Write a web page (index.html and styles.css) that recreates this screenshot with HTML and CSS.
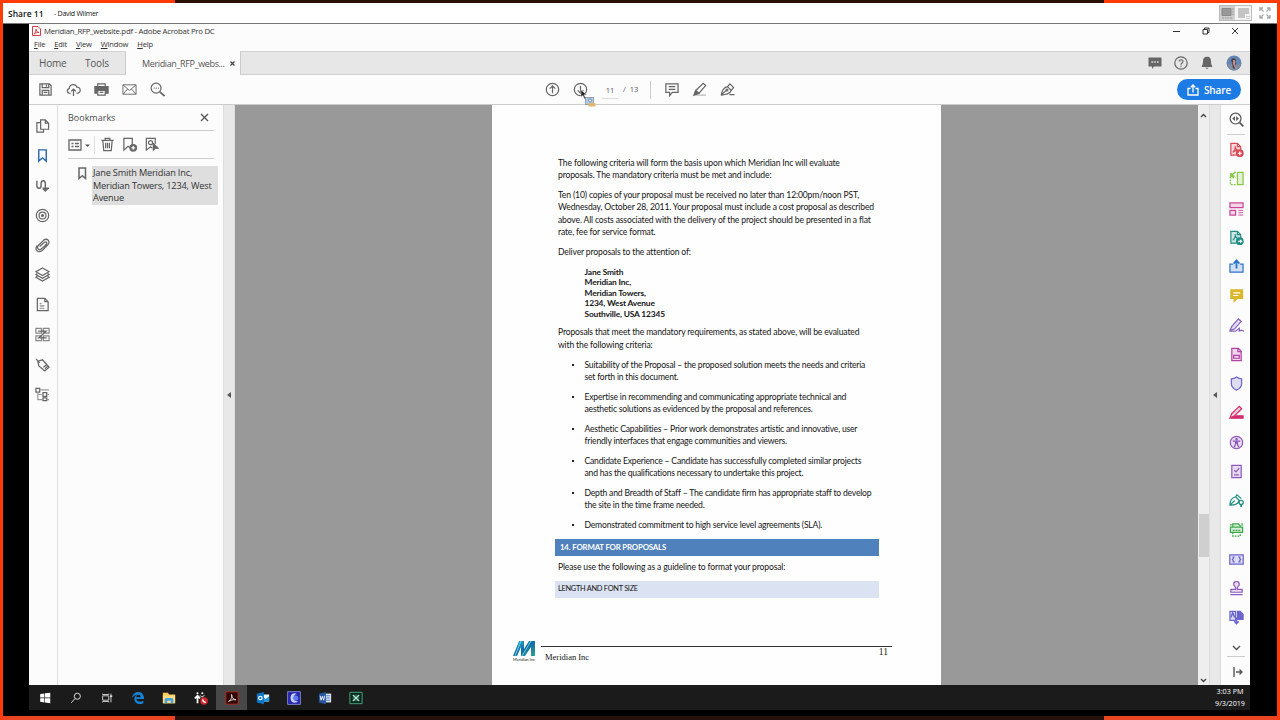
FILE: index.html
```html
<!DOCTYPE html>
<html lang="en">
<head>
    <meta charset="UTF-8">
    <meta name="viewport" content="width=device-width, initial-scale=1.0">
    <title>Share 11 - David Wilmer</title>
    <link rel="stylesheet" href="styles.css">
</head>
<body>
    <div class="share-edge"></div>
    <header class="share-bar">
        <span class="share-name">Share 11</span>
        <span class="share-user">- David Wilmer</span>
        <div class="share-views">
            <svg class="view-toggle" width="33" height="16" viewBox="0 0 33 16">
                <rect x=".5" y=".5" width="32" height="15" fill="#f4f4f4" stroke="#bbb"/>
                <path d="M1 1h15v14H1z" fill="#cfcfcf"/>
                <path d="M3 3.500h9v7H3z" fill="#999" stroke="#888"/>
                <path d="M14 3v8M3 13h11" stroke="#999" stroke-dasharray="2 .7"/>
                <path d="M19 3h11v6H19zM19 9h7v4h-7z" fill="#c4c4c4"/>
                <path d="M27 11.500h4M27 13.500h4" stroke="#ccc"/>
            </svg>
            <svg width="12" height="12" viewBox="0 0 12 12" fill="none" stroke="#aaa" stroke-width="1.300">
                <path d="M1 4V1h3M1 1l3.500 3.500M8 1h3v3M11 1 7.500 4.500M1 8v3h3M1 11l3.500-3.500M8 11h3V8M11 11 7.500 7.500"/>
            </svg>
        </div>
    </header>

    <div class="desktop">
        <div class="window">
            <div class="title-bar">
                <svg width="9" height="10" viewBox="0 0 9 10" fill="none" stroke="#d33d43"><path d="M.5.5h5.500l2.500 2.500v6.500h-8zM2 8c2-2 2.500-4 2-5 0 2 1 3 3 3.500-2-.2-3.500.3-5 1.500"/></svg>
                <span>Meridian_RFP_website.pdf - Adobe Acrobat Pro DC</span>
                <div class="window-buttons">
                    <svg viewBox="0 0 8 8"><path d="M0 4.500h7"/></svg>
                    <svg viewBox="0 0 8 8"><path d="M1 2.500h4.500V7H1zM2.500 2.500V1H7v4.500H5.500"/></svg>
                    <svg viewBox="0 0 8 8"><path d="m1 1 6 6M7 1 1 7"/></svg>
                </div>
            </div>
            <nav class="menu-bar">
                <span><u>F</u>ile</span><span><u>E</u>dit</span><span><u>V</u>iew</span><span><u>W</u>indow</span><span><u>H</u>elp</span>
            </nav>
            <div class="tab-strip">
                <span class="tab-home">Home</span>
                <span class="tab-tools">Tools</span>
                <div class="tab-file"><span>Meridian_RFP_webs...</span><svg width="5" height="5" viewBox="0 0 5 5" stroke="#444" stroke-width="1.200"><path d="m.5.5 4 4m0-4-4 4"/></svg></div>
                <div class="account">
                    <svg width="14" height="14" viewBox="0 0 14 14"><path d="M.5 1.500h13v9H6L4 13v-2.500H.5z" fill="#666"/><path d="M3.500 6h1.300M6.300 6h1.300M9.200 6h1.300" stroke="#fff" stroke-width="1.300"/></svg>
                    <svg width="14" height="14" viewBox="0 0 14 14" fill="none" stroke="#666" stroke-width="1.200"><circle cx="7" cy="7" r="6.200"/><path d="M5.200 5.500c0-2.400 3.800-2.300 3.700 0C8.900 7 7 6.900 7 8.700M7 9.700V11"/></svg>
                    <svg width="14" height="14" viewBox="0 0 14 14"><path d="M7 .8c3 0 4 2 4 4.500C11 8 11.500 9 12.500 11h-11C2.500 9 3 8 3 5.300 3 2.800 4 .8 7 .8M5.500 11.700h3c0 1.500-3 1.500-3 0" fill="#666"/></svg>
                    <svg width="16" height="16" viewBox="0 0 16 16"><circle cx="8" cy="8" r="7.500" fill="#6585b2"/><path d="M1 10c3-2 7 0 14-1-1 4-4 6.500-7 6.500S2 13 1 10" fill="#7e8da3"/><circle cx="7.500" cy="5.500" r="2.300" fill="#4a3d46"/><path d="M6 7.500h4l-1 6H7z" fill="#454556"/><path d="M7 5h2v5l2 3H9L7 9z" fill="#c88c80"/></svg>
                </div>
            </div>
            <div class="toolbar">
                <div class="file-tools">
                    <svg class="ic" viewBox="0 0 16 16"><path d="M2 2h10l2 2v10H2zM4.500 2v4h7V2M9 3v2M4.500 14V9h7v5M6 11h4"/></svg>
                    <svg class="ic" viewBox="0 0 16 16"><path d="M5 12H4C1 12 .5 7.500 3.500 7c0-5 7-5.500 8-1.500C16 5 16.500 12 12 12h-1M8 15V7.500M5.500 10 8 7.500l2.500 2.500"/></svg>
                    <svg class="ic" viewBox="0 0 16 16"><path d="M4 5V2h8v3M4 14V9h8v5z"/><path d="M1 5h14v7h-2V8.500H3V12H1z" fill="#666"/><path d="M6 11h4"/></svg>
                    <svg class="ic" viewBox="0 0 16 16"><path d="M1 3h14v10H1zl7 6 7-6M1 13l5-5.500M15 13l-5-5.500" stroke-width="1"/></svg>
                    <svg class="ic" viewBox="0 0 16 16"><circle cx="6.500" cy="6.500" r="5.300"/><path d="m10.500 10.500 5 4.500" stroke-width="1.800"/><path d="M4 6.500h1M6.200 6.500h1M8.400 6.500h1"/></svg>
                </div>
                <div class="page-tools">
                    <svg class="ic" viewBox="0 0 16 16"><circle cx="8" cy="8" r="6.600"/><path d="M8 12V4M5 7l3-3 3 3"/></svg>
                    <div class="next-page">
                        <svg class="ic" viewBox="0 0 16 16"><circle cx="8" cy="8" r="6.600"/><path d="M8 4v8M5 9l3 3 3-3"/></svg>
                        <svg class="cursor" width="17" height="18" viewBox="0 0 17 18"><path d="M1 0v7l1.800-1.800L4.500 9l1.200-.7L4 4.800h2.500z" fill="#222" stroke="#fff" stroke-width=".4"/><rect x="5.500" y="7.500" width="8" height="7" fill="#b4cbe4" stroke="#798795" stroke-width=".7"/><circle cx="10" cy="10.500" r="1.600" fill="#dfeaf5" stroke="#6c8fb4"/><rect x="8.500" y="13" width="7" height="3.500" rx="1" fill="#e0b56c"/></svg>
                    </div>
                    <span class="page-number">11</span>
                    <span class="page-count">/&nbsp; 13</span>
                    <i></i>
                    <svg class="ic" viewBox="0 0 16 16"><path d="M2 2h13v9H9l-3 3.500V11H2zM5 5h7M5 7.800h7"/></svg>
                    <svg class="ic" viewBox="0 0 16 16"><path d="M7 13h8v2H2z" fill="#ccc" stroke="none"/><path d="m4 9 8-7.500 2.500 2.300L7.500 12 3 12.500z"/><path d="m4 9 3.500 3L2 14z" fill="#666"/></svg>
                    <svg class="ic" viewBox="0 0 16 16"><path d="M1.500 14C2 9 4 6 8 5l4 4c-1.500 4-6 4.500-10.500 5zl5-5M8 5l2.500-3 4 4L12 9M10 13.500h5.500"/><circle cx="7.500" cy="8.500" r="1"/></svg>
                </div>
                <div class="share-button"><svg width="12" height="12" viewBox="0 0 12 12" fill="none" stroke="#fff" stroke-width="1.300"><path d="M3.500 4.500H1v6.500h10V4.500H8.500M6 8.500V1M3.800 3.200 6 1l2.200 2.200"/></svg>Share</div>
            </div>

            <div class="workspace">
                <aside class="nav-rail">
                    <svg class="ic" viewBox="0 0 16 16"><path d="M6 2h5l3.500 3.500V12H6zM11 2v3.500h3.500M6 5H2v10h7v-3"/></svg>
                    <svg class="ic active" viewBox="0 0 16 16"><path d="M4 2h8v12l-4-3.500L4 14z" stroke-width="1.500"/></svg>
                    <svg class="ic" viewBox="0 0 16 16"><path d="M2 3v5c0 4 4.500 4 4.500 0V6c0-4 4.500-4 4.500 0v8M8.500 11.500l2.500 2.500 2.500-2.500M8 11h7" stroke-width="1.500"/></svg>
                    <svg class="ic" viewBox="0 0 16 16"><circle cx="8" cy="8" r="6.600"/><circle cx="8" cy="8" r="3.700"/><circle cx="8" cy="8" r="1" fill="#666"/></svg>
                    <svg class="ic" viewBox="0 0 16 16"><path d="m5 9 5-4.500c2-1.500 3.500 1 2 2.500L7 11.500c-3 2.500-6-1-3-4l5-5c4-3 8 1 4.500 5L8 13c-5 4-9-1-5.500-5"/></svg>
                    <svg class="ic" viewBox="0 0 16 16"><path d="m8 1 7 4-7 4-7-4zM2.500 7 1 8l7 4 7-4-1.500-1M2.500 10 1 11l7 4 7-4-1.500-1"/></svg>
                    <svg class="ic" viewBox="0 0 16 16"><path d="M2.500 1.500h8L14 5v9.500H2.500zM10.500 1.500V5H14"/><path d="M5 7h2M5 9.500h5M5 12h5" stroke="#888"/></svg>
                    <svg class="ic" viewBox="0 0 16 16"><path d="M1 1.500h6v5H1zM9 1.500h6v5H9zM1 9.500h6v5H1zM9 9.500h6v5H9z" stroke="#888"/><path d="M3.500 4.500H12L4 11.500h8.500" /></svg>
                    <svg class="ic" viewBox="0 0 16 16"><path d="M3 4.500 8 3l7 8-4.500 4L4 9.500zM5 6 1 2M9 11l3-2.500M10.500 12.500l3-2.500"/></svg>
                    <svg class="ic" viewBox="0 0 16 16"><path d="M1 1.500h4v4H1zM8.500 6h4v4h-4zM8.500 11.500h4v3h-4z"/><path d="M5 3h10M3 5.500v8h5.500M3 8h5.500M12.500 8H15M12.500 13.500H15" stroke="#999"/></svg>
                </aside>
                <section class="bookmarks">
                    <div class="bookmarks-head"><span>Bookmarks</span><svg width="9" height="9" viewBox="0 0 9 9" stroke="#555" stroke-width="1.300"><path d="m1 1 7 7m0-7L1 8"/></svg></div>
                    <div class="bookmarks-tools">
                        <svg width="23" height="14" viewBox="0 0 23 14" fill="none" stroke="#666" stroke-width="1.300"><path d="M1 2h12v10H1zM3.500 5.500h2M3.500 8.500h2M7 5.500h4M7 8.500h4"/><path d="M17 6.500h5L19.500 9z" fill="#555" stroke="none"/></svg>
                        <i></i>
                        <svg class="ic" viewBox="0 0 16 16"><path d="M1.500 3.500h13M5.500 3.500v-2h5v2M3 3.500l1 11h8l1-11M6 6v6M8 6v6M10 6v6"/></svg>
                        <svg class="ic" viewBox="0 0 16 16"><path d="M9 11.500 6.500 10 2 14V1.500h9v7"/><circle cx="12" cy="11.500" r="3.500" fill="#666"/><path d="M12 9.500v4M10 11.500h4" stroke="#fff"/></svg>
                        <svg class="ic" viewBox="0 0 16 16"><path d="m9 12-2-1.500L2.500 14V1.500H12v6"/><circle cx="7" cy="6" r="2.200"/><path d="m10 7 5 5h-3l-2 2z" fill="#666"/></svg>
                    </div>
                    <div class="bookmark">
                        <svg width="9" height="13" viewBox="0 0 9 13" fill="none" stroke="#666" stroke-width="1.500"><path d="M1 1h6.500v10.500L4.300 8.700 1 11.500z"/></svg>
                        <p>Jane Smith Meridian Inc,<br>Meridian Towers, 1234, West<br>Avenue</p>
                    </div>
                </section>
                <div class="splitter splitter-left"><i></i></div>
                <main class="document">
                    <article class="page">
                        <p>The following criteria will form the basis upon which Meridian Inc will evaluate<br>proposals. The mandatory criteria must be met and include:</p>
                        <p>Ten (10) copies of your proposal must be received no later than 12:00pm/noon PST,<br>Wednesday, October 28, 2011. Your proposal must include a cost proposal as described<br>above. All costs associated with the delivery of the project should be presented in a flat<br>rate, fee for service format.</p>
                        <p>Deliver proposals to the attention of:</p>
                        <address>Jane Smith<br>Meridian Inc,<br>Meridian Towers,<br>1234, West Avenue<br>Southville, USA 12345</address>
                        <p>Proposals that meet the mandatory requirements, as stated above, will be evaluated<br>with the following criteria:</p>
                        <ul>
                            <li>Suitability of the Proposal – the proposed solution meets the needs and criteria<br>set forth in this document.</li>
                            <li>Expertise in recommending and communicating appropriate technical and<br>aesthetic solutions as evidenced by the proposal and references.</li>
                            <li>Aesthetic Capabilities – Prior work demonstrates artistic and innovative, user<br>friendly interfaces that engage communities and viewers.</li>
                            <li>Candidate Experience – Candidate has successfully completed similar projects<br>and has the qualifications necessary to undertake this project.</li>
                            <li>Depth and Breadth of Staff – The candidate firm has appropriate staff to develop<br>the site in the time frame needed.</li>
                            <li>Demonstrated commitment to high service level agreements (SLA).</li>
                        </ul>
                        <h2>14. FORMAT FOR PROPOSALS</h2>
                        <p>Please use the following as a guideline to format your proposal:</p>
                        <h3>LENGTH AND FONT SIZE</h3>
                        <footer>
                            <div class="logo">
                                <svg width="22" height="17" viewBox="0 0 22 17">
                                    <defs><linearGradient id="logoFill" x1="0" y1="0" x2="1" y2="1"><stop offset="0" stop-color="#35b6d4"/><stop offset=".5" stop-color="#126caa"/><stop offset="1" stop-color="#2da58d"/></linearGradient></defs>
                                    <path d="M6 1h5v8l5-8h6v15h-4V7l-6 9H8V7l-4 9H0z" fill="url(#logoFill)"/><path d="m8 1-6 15M18 1 9 16" stroke="#70d2cf"/>
                                </svg>
                                <small>Meridian Inc</small>
                            </div>
                            <div class="footer-line"><span>Meridian Inc</span><b>11</b></div>
                        </footer>
                    </article>
                </main>
                <div class="scrollbar">
                    <svg width="7" height="5" viewBox="0 0 7 5"><path d="m1 4 2.500-2.500L6 4"/></svg>
                    <div class="thumb"></div>
                    <svg width="7" height="5" viewBox="0 0 7 5"><path d="m1 1 2.500 2.500L6 1"/></svg>
                </div>
                <div class="splitter splitter-right"><i></i></div>
                <aside class="tool-rail">
                    <svg class="ic search" viewBox="0 0 16 16"><circle cx="7" cy="7" r="5.800"/><path d="m11.300 11.300 4 4" stroke-width="1.800"/><path d="M6.300 4.500v5L3.500 7zM7.700 4.500v5L10.500 7z" fill="#555" stroke="none"/></svg>
                    <i></i>
                    <svg class="ic red" viewBox="0 0 16 16"><path class="tint" d="M8 14H2V1.500h7L12.500 5v4M9 1.500V5h3.500"/><path d="M4 11c3-3 3-5 2.500-6.500C6.500 7 8 8.500 10 9M4 11c2-2 4-2 5-2"/><circle class="solid" cx="11.500" cy="12" r="3.500"/><path d="M9.500 12h4M11.500 10v4" stroke="#fff"/></svg>
                    <svg class="ic lime" viewBox="0 0 16 16"><path class="tint" d="M9 1.500h6v13H9z"/><path d="M7 14.500H1.500V7H7" stroke-dasharray="2 1"/><path d="M7 1 2 5M2 2v3.500h4" stroke-width="1.700"/></svg>
                    <svg class="ic pink" viewBox="0 0 16 16"><path class="tint" d="M1 2h14v5H1zM1 10h6v5H1z"/><path d="M10 10h5M10 12.500h5M10 15h5" stroke-width="1"/></svg>
                    <svg class="ic teal" viewBox="0 0 16 16"><path class="tint" d="M8 14H2V1.500h7L12.500 5v4M9 1.500V5h3.500"/><path d="M4 11c3-3 3-5 2.500-6.500C6.500 7 8 8.500 10 9"/><circle class="solid" cx="11.500" cy="12" r="3.500"/><path d="M9.500 12h4M12 10.500l1.500 1.500-1.500 1.500" stroke="#fff"/></svg>
                    <svg class="ic blue" viewBox="0 0 16 16"><path class="tint" d="M4.500 5.500H1V14h14V5.500h-3.500"/><path d="M8 10V2M5 5l3-3.500L11 5" stroke-width="2"/></svg>
                    <svg class="ic yellow" viewBox="0 0 16 16"><path class="solid" d="M2 2h12.500v9H9l-3.500 3.500V11H2z"/><path d="M4.500 5.200h7.500M4.500 8H10" stroke="#fff"/></svg>
                    <svg class="ic purple" viewBox="0 0 16 16"><path class="tint" d="m3 9 7-8 3 2.500-7 8-5 2z"/><path d="M1 14h6l4-3v3l2-1 3 1"/></svg>
                    <svg class="ic magenta" viewBox="0 0 16 16"><path class="tint" d="M3 1.500h7l3 3v10H3zM9.500 1.500v3.500H13M5 9h6v3H5z"/></svg>
                    <svg class="ic indigo" viewBox="0 0 16 16"><path class="tint" d="M8 1c2 1.500 3.500 2 5.500 2v5c0 3.500-3 6-5.500 7-2.500-1-5.500-3.500-5.500-7V3C4.500 3 6 2.500 8 1z"/></svg>
                    <svg class="ic crimson" viewBox="0 0 16 16"><path class="tint" d="m3 9 8-7.500L13.500 4 6 11.500 1 14z"/><path class="solid" d="M8 11.500h7V14H2z"/></svg>
                    <svg class="ic violet" viewBox="0 0 16 16"><circle class="tint" cx="8" cy="8" r="6.600"/><circle class="solid" cx="8" cy="4.500" r=".7"/><path d="M4 6.500h8M8 6v3.500M7 7v3l-1.500 3M9 7v3l1.500 3"/></svg>
                    <svg class="ic violet" viewBox="0 0 16 16"><path class="tint" d="M3 1.500h10v13H3z"/><path d="m5.500 6.500 2 2 3.500-4M5.500 11.500h5"/></svg>
                    <svg class="ic teal" viewBox="0 0 16 16"><path d="M1 13C1 8 3 5 7 4l4 4c-1 4-5 5-10 5zl5-5M7 4l1.500-2L13 6"/><circle cx="13" cy="10" r="2.200"/><path d="M13 12v3" stroke-width="2"/></svg>
                    <svg class="ic green" viewBox="0 0 16 16"><path class="tint" d="M4 5V2h6l2 2v1M1.500 5.500h13V11h-13z"/><path d="M4 9h8M4 11v4h8v-4" stroke-dasharray="2 1"/><path d="M1 3h2M14 1v3"/></svg>
                    <svg class="ic indigo" viewBox="0 0 16 16"><path class="tint" d="M.8 3h14.400v10H.8z"/><path d="M6 5.500H4.500V7L3.500 8l1 1v1.500H6M10 5.500h1.500V7l1 1-1 1v1.500H10"/></svg>
                    <svg class="ic violet" viewBox="0 0 16 16"><path class="tint" d="M7 9c1-3-2-3-2-5.500a3 3 0 0 1 6 0C11 6 8 6 9 9h5v3H2V9zM1.500 14.500h13"/></svg>
                    <svg class="ic indigo last" viewBox="0 0 16 16"><path class="tint" d="M1 1.500h6V11H1z"/><path class="solid" d="M9 1.500h3L15 4.500V10H9z"/><path d="m2 8 2-5 2 5M8 8v6M5.500 12 8 14.500l2.500-2.500" stroke-width="1.600"/></svg>
                    <svg class="chevron" width="9" height="6" viewBox="0 0 9 6" fill="none" stroke="#555" stroke-width="1.400"><path d="m1 1 3.500 3.500L8 1"/></svg>
                    <i></i>
                    <svg class="collapse" width="10" height="11" viewBox="0 0 10 11" fill="none" stroke="#555" stroke-width="1.400"><path d="M1 0v10M3 5h6M6.500 2.500 9 5 6.500 7.500"/></svg>
                </aside>
            </div>
            <div class="taskbar">
                <div><svg viewBox="0 0 16 16"><path d="m2.500 3.500 4.800-.7v4.700H2.500zM8 2.700l6-.7v5.500H8zM2.500 8.200h4.800v4.900l-4.800-.7zM8 8.200h6V14l-6-.8z" fill="#fff"/></svg></div>
                <div><svg viewBox="0 0 16 16" fill="none" stroke="#eee"><circle cx="9.500" cy="6" r="3.500"/><path d="m7 8.500-4.500 5"/></svg></div>
                <div><svg viewBox="0 0 16 16" fill="none" stroke="#ddd"><path d="M3 5.500h7v5H3zM3 3v1h7V3M3 13v-1h7v1M12.500 3v10"/><path d="M11.500 6h2.500" stroke-width="2"/></svg></div>
                <div><svg viewBox="0 0 16 16"><path d="M1 8C2 3 5 1 8.500 1 13 1 15 5 15 9H6c1 4 5 3.500 8 2v3c-5 2.500-11 0-10-6 .5-2 2-3.500 4-4-3 0-5 1.500-7 4m5-1h5c0-4-5-3-5 0" fill="#1683d8" fill-rule="evenodd"/></svg></div>
                <div><svg viewBox="0 0 16 16"><path d="M1 2h6l1 2h7v10H1z" fill="#f5ca55"/><path d="M1 5h14v9H1z" fill="#ffdc82"/><path d="M3 14v-4c0-1 1-2 2-2h6c1 0 2 1 2 2v4h-3v-3H6v3z" fill="#47a4dc"/></svg></div>
                <div><svg viewBox="0 0 16 16" fill="none" stroke="#fff"><path d="M4 14V6M1 8.500l3-3 3 3" stroke-width="2"/><circle cx="4" cy="2.500" r="1.200" fill="#fff" stroke="none"/><circle cx="9.500" cy="2.500" r="1.200" fill="#fff" stroke="none"/><path d="m7 5 2 2 3-2"/><circle cx="11.500" cy="11.500" r="4.300" fill="#d5262f" stroke="none"/><path d="M10 9.500c0 2 1.500 3.500 3.500 3.500" stroke-width="1.500"/></svg></div>
                <div class="running"><svg viewBox="0 0 16 16" fill="none"><path d="M1 1h14v14H1z" fill="#310606" stroke="#b52b20"/><path d="M4 12c4-3 4-6 3.500-8C7.500 7 9 9.500 12.500 10 9 9.500 6 10.500 4 12" stroke="#eee"/></svg></div>
                <div><svg viewBox="0 0 16 16"><path d="M7 4h8v8H7z" fill="#e9f4fc"/><path d="m7 6 4 3 4-3v6H7z" fill="#2993dd"/><path d="m1 3 8-2v14l-8-2z" fill="#0876c8"/><circle cx="5" cy="8" r="2" fill="none" stroke="#fff" stroke-width="1.400"/></svg></div>
                <div><svg viewBox="0 0 16 16"><path d="M.7.7h14.600v14.600H.7z" fill="#2525ad" stroke="#8790cd"/><path d="M12 4C8 1 4 3 4 8s4 7 9 4c-3 0-5-1-5-4s1-5 4-4" fill="#c4cfff"/><circle cx="10" cy="8" r="3" fill="#607af1"/></svg></div>
                <div><svg viewBox="0 0 16 16"><path d="M7 3h8v10H7z" fill="#eef3fb"/><path d="M9 5h5M9 7h5M9 9h5M9 11h5" stroke="#557fc5"/><path d="m1 3 8-2v14l-8-2z" fill="#24559e"/><path d="m2.500 5.500 1 5L5 6l1.500 4.500 1-5" fill="none" stroke="#fff"/></svg></div>
                <div><svg viewBox="0 0 16 16" fill="none"><path d="M1 1.500h14v13H1z" fill="#08241b" stroke="#45b586"/><path d="m4.500 4.500 7 7m0-7-7 7" stroke="#bcebd8" stroke-width="1.600"/><path d="M8 4v2M8 10v2M4 8h2M10 8h2" stroke="#45b586"/></svg></div>
                <div class="clock">3:03 PM<br>9/3/2019</div>
            </div>
        </div>
    </div>
    <div class="share-edge bottom"></div>
</body>
</html>
```
FILE: styles.css
```css
* {
    box-sizing: border-box;
}

body {
    margin: 0;
    width: 1280px;
    height: 720px;
    overflow: hidden;
    display: flex;
    flex-direction: column;
    background: #000;
    border-left: 3px solid #ff3b05;
    border-right: 3px solid #ff3b05;
    font-family: 'Open Sans', sans-serif;
    color: #333;
}

svg {
    display: block;
    flex-shrink: 0;
}

.share-edge {
    height: 3px;
    margin: 0 -3px;
    background: linear-gradient(90deg, #ff3b05 175px, #291006 175px, #291006 1104px, #ff3b05 1104px);
}

.share-edge.bottom {
    height: 4px;
    background: linear-gradient(90deg, #e94522 175px, #24100c 175px, #24100c 1104px, #e94522 1104px);
}

.share-bar {
    height: 21px;
    background: #fff;
    border-bottom: 1px solid #777;
    display: flex;
    align-items: center;
    padding: 0 6px 0 5px;
    color: #111;
}

.share-name {
    font-size: 8.500px;
    font-weight: 600;
    width: 46px;
    white-space: nowrap;
}

.share-user {
    font-size: 7px;
    letter-spacing: -.250px;
}

.share-views {
    display: flex;
    align-items: center;
    gap: 7px;
    margin-left: auto;
}

.desktop {
    flex: 1;
    padding: 0 27px 6px 26px;
}

.window {
    height: 686px;
    display: flex;
    flex-direction: column;
    background: #fcfcfc;
}

.title-bar {
    height: 15px;
    display: flex;
    align-items: center;
    gap: 3px;
    padding: 0 0 1px 3px;
    font-size: 7.800px;
    letter-spacing: -.260px;
}

.window-buttons {
    margin-left: auto;
    display: flex;
    gap: 21px;
    padding-right: 11px;
}

.window-buttons svg {
    width: 8px;
    height: 8px;
    fill: none;
    stroke: #333;
}

.menu-bar {
    height: 12px;
    display: flex;
    gap: 9px;
    padding-left: 5px;
    font-size: 7.600px;
    line-height: 11px;
    letter-spacing: -.200px;
}

.menu-bar u {
    text-underline-offset: 1px;
}

.tab-strip {
    height: 24px;
    display: flex;
    align-items: center;
    background: #e7e7e7;
    border-top: 1px solid #d2d2d2;
    border-bottom: 1px solid #d0d0d0;
    color: #555;
    font-size: 10px;
    letter-spacing: -.200px;
}

.tab-home {
    width: 56px;
    padding-left: 10px;
}

.tab-tools {
    width: 40px;
}

.tab-file {
    width: 116px;
    height: 24px;
    display: flex;
    align-items: center;
    gap: 5px;
    padding-left: 16px;
    background: #fcfcfc;
    border-left: 1px solid #ccc;
    border-right: 1px solid #ccc;
    font-size: 9px;
    letter-spacing: -.360px;
}

.account {
    margin-left: auto;
    display: flex;
    align-items: center;
    gap: 12px;
    padding-right: 8px;
}

.toolbar {
    height: 30px;
    display: flex;
    align-items: center;
    border-bottom: 1px solid #ccc;
    font-size: 8px;
    color: #555;
}

.ic {
    width: 15px;
    height: 15px;
    fill: none;
    stroke: #666;
    stroke-width: 1.300;
}

.file-tools {
    display: flex;
    gap: 13px;
    padding-left: 9px;
    width: 516px;
}

.page-tools {
    display: flex;
    align-items: center;
}

.next-page {
    position: relative;
    margin-left: 13px;
}

.cursor {
    position: absolute;
    left: 7px;
    top: 8px;
}

.page-number {
    width: 16px;
    margin-left: 14px;
    padding: 4px 0 3px;
    text-align: center;
    border-bottom: 1px solid #ddd;
    font-size: 7.500px;
    line-height: 10px;
}

.page-count {
    width: 31px;
    padding-left: 5px;
    font-size: 7.500px;
    line-height: 10px;
    padding-bottom: 1px;
    white-space: nowrap;
}

.page-tools i {
    width: 1px;
    height: 18px;
    background: #ccc;
    margin-left: 1px;
}

.page-tools i + .ic,
.page-tools .ic + .ic {
    margin-left: 13px;
}

.share-button {
    display: flex;
    align-items: center;
    justify-content: center;
    gap: 5px;
    width: 64px;
    height: 21px;
    margin-left: auto;
    margin-right: 9px;
    border-radius: 11px;
    background: #1d7be6;
    color: #fff;
    font-size: 10px;
    font-weight: 600;
    letter-spacing: -.100px;
}

.workspace {
    height: 580px;
    display: flex;
}

.nav-rail {
    width: 29px;
    border-right: 1px solid #ddd;
    padding: 13px 0 0 6px;
    display: flex;
    flex-direction: column;
    gap: 14.900px;
}

.nav-rail .active {
    stroke: #2467ad;
}

.bookmarks {
    width: 165px;
    padding: 0 9px 0 10px;
    color: #4b4b4b;
}

.bookmarks-head {
    height: 26px;
    display: flex;
    align-items: center;
    justify-content: space-between;
    padding-right: 5px;
    border-bottom: 1px solid #ccc;
    font-size: 9px;
}

.bookmarks-head svg {
    margin-top: -1px;
}

.bookmarks-tools {
    height: 28px;
    display: flex;
    align-items: center;
    border-bottom: 1px solid #ccc;
}

.bookmarks-tools i {
    width: 1px;
    height: 18px;
    margin: 0 5px 0 3px;
    background: #ddd;
}

.bookmarks-tools .ic + .ic {
    margin-left: 7px;
}

.bookmark {
    display: flex;
    align-items: flex-start;
    gap: 5px;
    padding: 7px 0 0 10px;
}

.bookmark svg {
    margin-top: 1px;
}

.bookmark p {
    margin: 0;
    width: 126px;
    height: 39px;
    padding: 1px 0 0 1px;
    background: #dedede;
    color: #333;
    font-size: 9.200px;
    line-height: 12.700px;
    letter-spacing: -.180px;
    white-space: nowrap;
    flex-shrink: 0;
}

.splitter {
    width: 12px;
    display: flex;
    align-items: center;
    justify-content: center;
    background: #e8e8e8;
    border-left: 1px solid #ddd;
    border-right: 1px solid #ddd;
}

.splitter i {
    border: 3px solid transparent;
    border-left: 0;
    border-right: 4px solid #555;
}

.document {
    width: 963px;
    background: #999;
    padding-left: 257px;
}

.page {
    width: 449px;
    height: 580px;
    padding: 51.800px 62px 0 66px;
    background: #fefefe;
    color: #151515;
    font-family: Lato, sans-serif;
    font-size: 8.600px;
    line-height: 12.400px;
    letter-spacing: -.155px;
    white-space: nowrap;
}

.page p {
    margin: 0 0 7.400px;
}

.page address {
    margin: 0 0 7px 26.500px;
    padding-top: .700px;
    font-size: 8.400px;
    font-style: normal;
    font-weight: bold;
    line-height: 10.600px;
}

.page ul {
    margin: 0;
    padding: 0 0 0 26.500px;
    list-style: none;
    letter-spacing: -.205px;
}

.page li {
    display: flex;
    margin-bottom: 7.250px;
}

.page li::before {
    content: '';
    width: 2px;
    height: 2px;
    margin: 5px 10.500px 0 -12.500px;
    background: #222;
}

.page h2,
.page h3 {
    margin: 0 0 0 -3px;
    width: 324px;
    height: 17px;
    padding-left: 3px;
    font-size: 7.400px;
    line-height: 15px;
    letter-spacing: -.280px;
}

.page h2 {
    margin-bottom: 5.500px;
    padding-left: 5px;
    background: #4f81bd;
    color: #fff;
    font-size: 7.800px;
    line-height: 16px;
    letter-spacing: -.150px;
}

.page h3 {
    background: #dbe2f1;
    font-weight: normal;
}

.page footer {
    display: flex;
    margin: 42px -16px 0 -45px;
    letter-spacing: 0;
}

.logo {
    width: 28px;
    line-height: 5px;
}

.logo small {
    display: block;
    font-size: 4px;
}

.footer-line {
    display: flex;
    justify-content: space-between;
    width: 351px;
    height: 20px;
    margin-top: 6px;
    padding: 0 4px;
    border-top: 1px solid #333;
    font-family: 'Liberation Serif', serif;
    font-size: 8.500px;
}

.footer-line span {
    padding-top: 4px;
}

.footer-line b {
    font-size: 9.500px;
    font-weight: normal;
    line-height: 10px;
}

.scrollbar {
    width: 11px;
    display: flex;
    flex-direction: column;
    align-items: center;
    padding: 8px 0 3px;
    background: #eee;
}

.scrollbar svg {
    fill: none;
    stroke: #444;
    stroke-width: 1.400;
}

.thumb {
    width: 10px;
    height: 43px;
    margin: 396px 0 121px;
    background: #cfcfcf;
    flex-shrink: 0;
}

.tool-rail {
    width: 29px;
    display: flex;
    flex-direction: column;
    align-items: center;
    padding: 7px 0 0 1px;
}

.tool-rail .ic {
    margin-bottom: 14.250px;
    --tone: #555;
    stroke: var(--tone);
}

.tool-rail .ic.search {
    margin-bottom: 7px;
}

.tool-rail i {
    width: 18px;
    height: 1px;
    margin-bottom: 7px;
    background: #ccc;
    flex-shrink: 0;
}

.tool-rail .tint {
    fill: var(--tone);
    fill-opacity: .2;
}

.tool-rail .solid {
    fill: var(--tone);
}

.tool-rail .red { --tone: #d84b55; }
.tool-rail .lime { --tone: #86c943; }
.tool-rail .pink { --tone: #ce4696; }
.tool-rail .teal { --tone: #218d84; }
.tool-rail .blue { --tone: #2e74cb; }
.tool-rail .yellow { --tone: #d9b62b; }
.tool-rail .purple { --tone: #8661bd; }
.tool-rail .magenta { --tone: #b340a5; }
.tool-rail .indigo { --tone: #6c65cf; }
.tool-rail .crimson { --tone: #d12d6e; }
.tool-rail .violet { --tone: #9059bd; }
.tool-rail .green { --tone: #3caa48; }

.tool-rail .last {
    margin-bottom: 19.500px;
}

.chevron {
    margin-bottom: 5px;
}

.collapse {
    margin-top: 3px;
    margin-left: 4px;
}

.taskbar {
    height: 25px;
    display: flex;
    background: #1b1b1b;
}

.taskbar > div {
    width: 31.200px;
    display: flex;
    align-items: center;
    justify-content: center;
}

.taskbar svg {
    width: 14px;
    height: 14px;
}

.taskbar .running {
    background: #484848;
}

.taskbar .clock {
    width: 40px;
    margin-left: auto;
    color: #fff;
    font-size: 7.200px;
    line-height: 11.500px;
    text-align: center;
}
```
